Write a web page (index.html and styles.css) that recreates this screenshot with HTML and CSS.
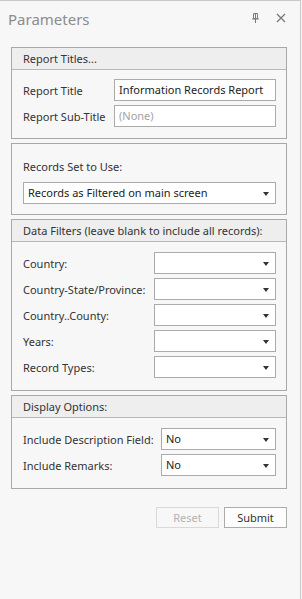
FILE: index.html
```html
<!DOCTYPE html>
<html>
<head>
<meta charset="utf-8">
<link rel="stylesheet" href="styles.css">
</head>
<body>
<div class="panel">
  <div class="titlebar">
    <span class="title">Parameters</span>
    <span class="tools">
      <svg class="pin" width="9" height="10" viewBox="0 0 9 10"><path d="M2.5 0.5h4v5h-4z M1 6h7 M4.5 6v4" fill="none" stroke="#7a7a7a" stroke-width="1"/><path d="M4.5 1v4.5" stroke="#7a7a7a" stroke-width="1"/></svg>
      <svg class="close" width="10" height="10" viewBox="0 0 10 10"><path d="M1 1L9 9M9 1L1 9" stroke="#7a7a7a" stroke-width="1.3"/></svg>
    </span>
  </div>

  <div class="groups">
    <section class="group">
      <div class="ghead">Report Titles...</div>
      <div class="gbody grid g1">
        <label>Report Title</label>
        <div class="field">Information Records Report</div>
        <label>Report Sub-Title</label>
        <div class="field placeholder">(None)</div>
      </div>
    </section>

    <section class="group">
      <div class="gbody stack">
        <label class="toplabel">Records Set to Use:</label>
        <div class="field select">Records as Filtered on main screen<span class="arrow"></span></div>
      </div>
    </section>

    <section class="group">
      <div class="ghead">Data Filters (leave blank to include all records):</div>
      <div class="gbody grid g3">
        <label>Country:</label>
        <div class="field select"><span class="arrow"></span></div>
        <label>Country-State/Province:</label>
        <div class="field select"><span class="arrow"></span></div>
        <label>Country..County:</label>
        <div class="field select"><span class="arrow"></span></div>
        <label>Years:</label>
        <div class="field select"><span class="arrow"></span></div>
        <label>Record Types:</label>
        <div class="field select"><span class="arrow"></span></div>
      </div>
    </section>

    <section class="group">
      <div class="ghead">Display Options:</div>
      <div class="gbody grid g4">
        <label>Include Description Field:</label>
        <div class="field select">No<span class="arrow"></span></div>
        <label>Include Remarks:</label>
        <div class="field select">No<span class="arrow"></span></div>
      </div>
    </section>
  </div>

  <div class="buttons">
    <button class="btn disabled">Reset</button>
    <button class="btn">Submit</button>
  </div>
</div>
</body>
</html>
```
FILE: styles.css
```css
html, body {
  margin: 0;
  padding: 0;
  background: #f7f7f7;
}
body {
  font-family: "Noto Sans", "Open Sans", sans-serif;
  font-size: 11px;
  color: #333;
}
.panel {
  width: 301px;
  height: 599px;
  box-sizing: border-box;
  border-top: 1px solid #c9c9c9;
  border-right: 1px solid #c9c9c9;
  background: #f7f7f7;
}
.titlebar {
  height: 37px;
  display: flex;
  align-items: center;
  justify-content: space-between;
  padding: 0 14px 0 8px;
}
.title {
  font-size: 15px;
  color: #8c8c8c;
  margin-top: -1px;
}
.tools {
  display: flex;
  align-items: center;
  gap: 16px;
  margin-top: -3px;
}
.groups {
  display: flex;
  flex-direction: column;
  gap: 4px;
  padding: 9px 0 0 11px;
  width: 276px;
}
.group {
  border: 1px solid #a8a8a8;
}
.ghead {
  height: 21px;
  line-height: 21px;
  background: #eeeeee;
  border-bottom: 1px solid #b8b8b8;
  padding-left: 11px;
  color: #333;
}
.gbody {
  padding: 9px 10px 11px 11px;
}
.grid {
  display: grid;
  column-gap: 4px;
  row-gap: 4px;
  align-items: center;
}
.g1 { grid-template-columns: 87px 1fr; }
.g3 { padding-top: 10px; padding-bottom: 12px; grid-template-columns: 127px 1fr; }
.g4 { padding-top: 10px; padding-bottom: 12px; grid-template-columns: 134px 1fr; }
.stack {
  display: flex;
  flex-direction: column;
  padding-top: 15px;
  padding-bottom: 10px;
}
.toplabel {
  line-height: 15px;
  margin-bottom: 8px;
}
label {
  white-space: nowrap;
}
.field {
  position: relative;
  height: 22px;
  box-sizing: border-box;
  border: 1px solid #ababab;
  background: #fff;
  padding: 0 4px;
  line-height: 20px;
  color: #222;
  white-space: nowrap;
  overflow: hidden;
}
.field.placeholder {
  color: #a3a3a3;
}
.select {
  padding-right: 18px;
}
.arrow {
  position: absolute;
  right: 6px;
  top: 9px;
  width: 0;
  height: 0;
  border-left: 3.5px solid transparent;
  border-right: 3.5px solid transparent;
  border-top: 4px solid #333;
}
.buttons {
  display: flex;
  justify-content: flex-end;
  gap: 5px;
  padding: 18px 13px 0 0;
}
.btn {
  width: 63px;
  height: 21px;
  box-sizing: border-box;
  border: 1px solid #acacac;
  background: #fdfdfd;
  font: inherit;
  color: #333;
  padding: 0;
  line-height: 18px;
}
.btn.disabled {
  border-color: #d9d9d9;
  color: #b3b3b3;
  background: #f7f7f7;
}
```
